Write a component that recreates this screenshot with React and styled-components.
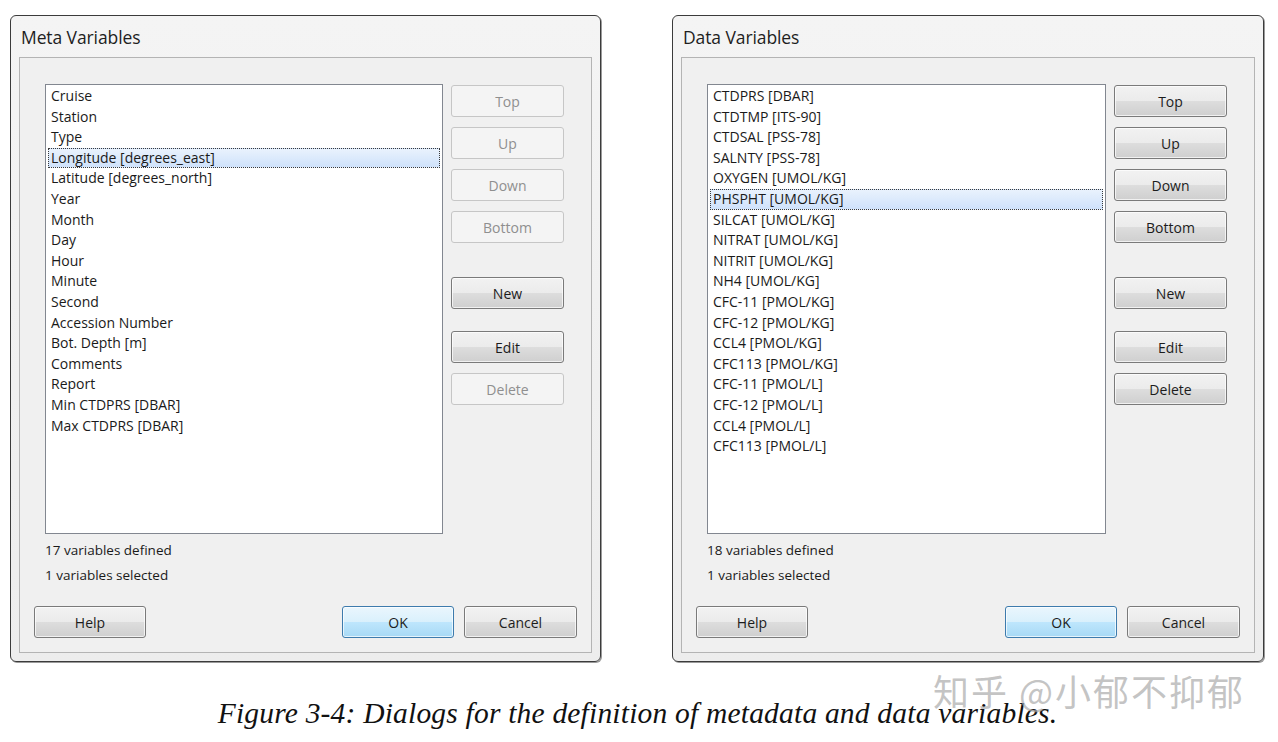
import React from "react";
import styled, { createGlobalStyle } from "styled-components";

const GlobalStyle = createGlobalStyle`
  html, body {
    margin: 0;
    padding: 0;
    background: #ffffff;
  }
  body {
    font-family: "Open Sans", "Noto Sans", sans-serif;
  }
`;

const Page = styled.div`
  position: relative;
  width: 1278px;
  height: 742px;
  overflow: hidden;
  background: #ffffff;
`;

const Dialogs = styled.div`
  display: flex;
  gap: 71px;
  padding: 15px 0 0 10px;
`;

const Dialog = styled.div`
  width: ${props => props.width}px;
  height: 647px;
  box-sizing: border-box;
  border: 1px solid #3b3b3b;
  border-radius: 6px;
  background: linear-gradient(180deg, #f4f4f4 0%, #ededed 100%);
  display: flex;
  flex-direction: column;
  box-shadow: 1px 1px 0 #9a9a9a;
`;

const Title = styled.div`
  height: 41px;
  padding-left: 10px;
  box-sizing: border-box;
  padding-top: 9px;
  font-size: 17.5px;
  color: #1e1e1e;
  letter-spacing: -0.1px;
`;

const Panel = styled.div`
  flex: 1;
  margin: 0 8px 8px 8px;
  border: 1px solid #b4b4b4;
  background: #f0f0f0;
  display: flex;
  flex-direction: column;
  padding: 26px 14px 14px 14px;
`;

const Body = styled.div`
  display: flex;
  gap: 8px;
  margin: 0 13px 0 11px;
  height: 450px;
`;

const ListBox = styled.div`
  flex: 1;
  background: #ffffff;
  border: 1px solid #828790;
  padding: 1px 2px;
  box-sizing: border-box;
`;

const Item = styled.div`
  height: 20.6px;
  line-height: 20px;
  font-size: 14px;
  color: #1a1a1a;
  padding-left: ${props => (props.selected ? "2px" : "3px")};
  box-sizing: border-box;
  white-space: nowrap;
  ${props =>
    props.selected &&
    `
    background: linear-gradient(180deg, #e9f2fd 0%, #cfe2fb 100%);
    border: 1px dotted #3a3a3a;
    line-height: 18px;
  `}
`;

const ButtonColumn = styled.div`
  width: 113px;
  display: flex;
  flex-direction: column;
  padding-top: 1px;
`;

const Button = styled.div`
  width: ${props => props.width || 113}px;
  height: 32px;
  box-sizing: border-box;
  border-radius: 3px;
  display: flex;
  align-items: center;
  justify-content: center;
  font-size: 14px;
  margin-top: ${props => props.gap || 0}px;
  margin-left: ${props => props.offset || 0}px;
  color: ${props => (props.disabled ? "#8f8f8f" : "#1c1c1c")};
  border: 1px solid ${props =>
    props.disabled ? "#c6c6c6" : props.primary ? "#3d7bad" : "#7a7a7a"};
  background: ${props =>
    props.disabled
      ? "#f4f4f4"
      : props.primary
      ? "linear-gradient(180deg, #eaf6fd 0%, #d9f0fc 50%, #bee6fd 51%, #a7d9f5 100%)"
      : "linear-gradient(180deg, #f2f2f2 0%, #ebebeb 50%, #dddddd 51%, #cfcfcf 100%)"};
  box-shadow: ${props =>
    props.disabled ? "none" : "inset 0 0 0 1px rgba(255,255,255,0.7)"};
`;

const Status = styled.div`
  margin-left: 11px;
  padding-top: 4px;
  font-size: 13.5px;
  color: #1a1a1a;
  line-height: 25px;
`;

const Footer = styled.div`
  margin-top: auto;
  display: flex;
  align-items: center;
`;

const Spacer = styled.div`
  flex: 1;
`;

const Caption = styled.div`
  text-align: center;
  margin-top: 34px;
  padding-right: 3px;
  font-family: "Liberation Serif", "DejaVu Serif", serif;
  font-style: italic;
  font-size: 29.5px;
  line-height: 34px;
  color: #111111;
  letter-spacing: 0.2px;
`;

const Watermark = styled.div`
  position: absolute;
  left: 933px;
  top: 664px;
  font-family: "Noto Sans CJK SC", sans-serif;
  font-size: 36px;
  color: rgba(170, 170, 170, 0.7);
  letter-spacing: 2px;
  white-space: nowrap;
`;

const metaItems = [
  "Cruise",
  "Station",
  "Type",
  "Longitude [degrees_east]",
  "Latitude [degrees_north]",
  "Year",
  "Month",
  "Day",
  "Hour",
  "Minute",
  "Second",
  "Accession Number",
  "Bot. Depth [m]",
  "Comments",
  "Report",
  "Min CTDPRS [DBAR]",
  "Max CTDPRS [DBAR]",
];

const dataItems = [
  "CTDPRS [DBAR]",
  "CTDTMP [ITS-90]",
  "CTDSAL [PSS-78]",
  "SALNTY [PSS-78]",
  "OXYGEN [UMOL/KG]",
  "PHSPHT [UMOL/KG]",
  "SILCAT [UMOL/KG]",
  "NITRAT [UMOL/KG]",
  "NITRIT [UMOL/KG]",
  "NH4 [UMOL/KG]",
  "CFC-11 [PMOL/KG]",
  "CFC-12 [PMOL/KG]",
  "CCL4 [PMOL/KG]",
  "CFC113 [PMOL/KG]",
  "CFC-11 [PMOL/L]",
  "CFC-12 [PMOL/L]",
  "CCL4 [PMOL/L]",
  "CFC113 [PMOL/L]",
];

function VariablesDialog({ title, items, selected, width, moveDisabled, deleteDisabled }) {
  return (
    <Dialog width={width}>
      <Title>{title}</Title>
      <Panel>
        <Body>
          <ListBox>
            {items.map((item, i) => (
              <Item key={i} selected={i === selected}>
                {item}
              </Item>
            ))}
          </ListBox>
          <ButtonColumn>
            <Button disabled={moveDisabled}>Top</Button>
            <Button disabled={moveDisabled} gap={10}>Up</Button>
            <Button disabled={moveDisabled} gap={10}>Down</Button>
            <Button disabled={moveDisabled} gap={10}>Bottom</Button>
            <Button gap={34}>New</Button>
            <Button gap={22}>Edit</Button>
            <Button disabled={deleteDisabled} gap={10}>Delete</Button>
          </ButtonColumn>
        </Body>
        <Status>
          {items.length} variables defined
          <br />1 variables selected
        </Status>
        <Footer>
          <Button width={112}>Help</Button>
          <Spacer />
          <Button width={112} primary>OK</Button>
          <Button width={113} offset={10}>Cancel</Button>
        </Footer>
      </Panel>
    </Dialog>
  );
}

export default function App() {
  return (
    <Page>
      <GlobalStyle />
      <Dialogs>
        <VariablesDialog
          title="Meta Variables"
          items={metaItems}
          selected={3}
          width={591}
          moveDisabled
          deleteDisabled
        />
        <VariablesDialog
          title="Data Variables"
          items={dataItems}
          selected={5}
          width={592}
        />
      </Dialogs>
      <Caption>Figure 3-4: Dialogs for the definition of metadata and data variables.</Caption>
      <Watermark>知乎 @小郁不抑郁</Watermark>
    </Page>
  );
}
